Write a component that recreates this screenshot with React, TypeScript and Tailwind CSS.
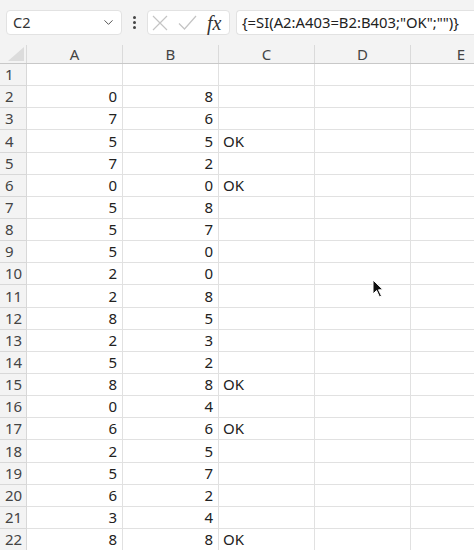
import { ChevronDown } from "lucide-react"

const rows: [string, string, string][] = [
    ["", "", ""],
    ["0", "8", ""],
    ["7", "6", ""],
    ["5", "5", "OK"],
    ["7", "2", ""],
    ["0", "0", "OK"],
    ["5", "8", ""],
    ["5", "7", ""],
    ["5", "0", ""],
    ["2", "0", ""],
    ["2", "8", ""],
    ["8", "5", ""],
    ["2", "3", ""],
    ["5", "2", ""],
    ["8", "8", "OK"],
    ["0", "4", ""],
    ["6", "6", "OK"],
    ["2", "5", ""],
    ["5", "7", ""],
    ["6", "2", ""],
    ["3", "4", ""],
    ["8", "8", "OK"],
]

const tallRows = [4, 11, 18]

export default function App() {
    return (
        <div className="relative w-[474px] h-[550px] overflow-hidden bg-white font-['Segoe_UI','Noto_Sans',sans-serif] text-[#222]">
            {/* formula bar */}
            <div className="flex items-start h-[45px] bg-[#f3f3f3] pt-[10px]">
                <div className="ml-[6px] flex items-center justify-between w-[116px] h-[25px] rounded-[4px] bg-white border border-[#e2e2e2] pl-[6px] pr-[5px]">
                    <span className="text-[14.5px] text-[#333]">C2</span>
                    <ChevronDown size={15} strokeWidth={1.6} className="text-[#555]" />
                </div>
                <div className="flex flex-col items-center justify-center gap-[2px] w-[25px] h-[25px]">
                    <span className="block w-[3px] h-[3px] rounded-full bg-[#444]" />
                    <span className="block w-[3px] h-[3px] rounded-full bg-[#444]" />
                    <span className="block w-[3px] h-[3px] rounded-full bg-[#444]" />
                </div>
                <div className="flex items-center w-[83px] h-[25px] rounded-[4px] bg-white border border-[#e2e2e2] pl-[4px]">
                    <svg width="16" height="16" viewBox="0 0 16 16" className="shrink-0">
                        <path d="M1 1 L15 15 M15 1 L1 15" stroke="#c4c4c4" strokeWidth="1.2" fill="none" />
                    </svg>
                    <svg width="19" height="15" viewBox="0 0 19 15" className="ml-[10px] shrink-0">
                        <path d="M1 8.5 L6.5 14 L18 1" stroke="#c4c4c4" strokeWidth="1.2" fill="none" />
                    </svg>
                    <span className="ml-[10px] font-['Liberation_Serif',serif] italic text-[20px] text-[#333] leading-none">
                        fx
                    </span>
                </div>
                <div className="ml-[6px] flex-1 flex items-center h-[25px] rounded-l-[4px] bg-white border border-r-0 border-[#e2e2e2] pl-[5px] whitespace-nowrap overflow-hidden">
                    <span className="text-[14.8px] text-[#222]">{'{=SI(A2:A403=B2:B403;"OK";"")}'}</span>
                </div>
            </div>

            {/* column headers */}
            <div className="flex h-[19px] bg-[#f3f3f3] border-b border-[#c8c8c8]">
                <div className="relative w-[27px] shrink-0 border-r border-[#dadada]">
                    <div className="absolute right-[2px] bottom-[2px] w-0 h-0 border-l-[16px] border-l-transparent border-b-[14px] border-b-[#dcdcdc]" />
                </div>
                {["A", "B", "C", "D"].map((c) => (
                    <div
                        key={c}
                        className="w-[96px] shrink-0 flex items-center justify-center border-r border-[#dadada] text-[15px] text-[#444]"
                    >
                        {c}
                    </div>
                ))}
                <div className="flex-1 flex items-center justify-end pr-[9px] text-[15px] text-[#444]">E</div>
            </div>

            {/* grid */}
            {rows.map((r, i) => {
                const n = i + 1
                const h = tallRows.includes(n) ? "h-[23px]" : "h-[22px]"
                return (
                    <div key={n} className={`flex ${h}`}>
                        <div className="w-[27px] shrink-0 flex items-center pl-[5px] bg-[#f3f3f3] border-r border-b border-[#d8d8d8] text-[15px] text-[#444]">
                            {n}
                        </div>
                        <div className="w-[96px] shrink-0 flex items-center justify-end pr-[5px] border-r border-b border-[#e1e1e1] text-[15px]">
                            {r[0]}
                        </div>
                        <div className="w-[96px] shrink-0 flex items-center justify-end pr-[5px] border-r border-b border-[#e1e1e1] text-[15px]">
                            {r[1]}
                        </div>
                        <div className="w-[96px] shrink-0 flex items-center pl-[4px] border-r border-b border-[#e1e1e1] text-[15px]">
                            {r[2]}
                        </div>
                        <div className="w-[96px] shrink-0 border-r border-b border-[#e1e1e1]" />
                        <div className="flex-1 border-b border-[#e1e1e1]" />
                    </div>
                )
            })}

            {/* mouse pointer */}
            <svg className="absolute left-[372px] top-[279px]" width="12" height="20" viewBox="0 0 12 20">
                <path d="M1 1 L1 15 L4.5 11.5 L7.5 18 L9.5 17 L6.5 10.8 L11 10.8 Z" fill="#111" stroke="#fff" strokeWidth="1" />
            </svg>
        </div>
    )
}
